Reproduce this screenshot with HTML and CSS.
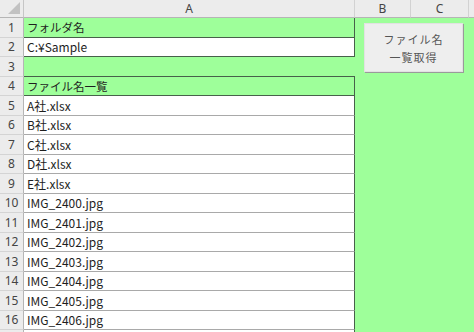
FILE: index.html
```html
<!DOCTYPE html>
<html lang="ja">
  <head>
    <meta charset="UTF-8" />
    <title>ファイル名一覧</title>
    <link rel="stylesheet" href="styles.css">
  </head>
  <body>
    <div class="sheet">
      <div class="corner"></div>
      <div class="col-head">A</div>
      <div class="col-head">B</div>
      <div class="col-head">C</div>
      <div class="col-head last"></div>

      <div class="row-head">1</div>
      <div class="cell title">フォルダ名</div>
      <div class="row-head">2</div>
      <div class="cell value">C:¥Sample</div>
      <div class="row-head">3</div>
      <div class="cell blank"></div>
      <div class="row-head">4</div>
      <div class="cell title">ファイル名一覧</div>
      <div class="row-head">5</div>
      <div class="cell item">A社.xlsx</div>
      <div class="row-head">6</div>
      <div class="cell item">B社.xlsx</div>
      <div class="row-head">7</div>
      <div class="cell item">C社.xlsx</div>
      <div class="row-head">8</div>
      <div class="cell item">D社.xlsx</div>
      <div class="row-head">9</div>
      <div class="cell item">E社.xlsx</div>
      <div class="row-head">10</div>
      <div class="cell item">IMG_2400.jpg</div>
      <div class="row-head">11</div>
      <div class="cell item">IMG_2401.jpg</div>
      <div class="row-head">12</div>
      <div class="cell item">IMG_2402.jpg</div>
      <div class="row-head">13</div>
      <div class="cell item">IMG_2403.jpg</div>
      <div class="row-head">14</div>
      <div class="cell item">IMG_2404.jpg</div>
      <div class="row-head">15</div>
      <div class="cell item">IMG_2405.jpg</div>
      <div class="row-head">16</div>
      <div class="cell item">IMG_2406.jpg</div>
      <div class="row-head"></div>
      <div class="cell item"></div>

      <!-- macro button floating over B:C -->
      <button class="macro-btn">ファイル名<br />一覧取得</button>
    </div>
  </body>
</html>
```

FILE: styles.css
```css
* {
  margin: 0;
  padding: 0;
  box-sizing: border-box;
}

body {
  background-color: #9eff9a;
  font-family: "Noto Sans CJK JP", "Noto Sans", sans-serif;
  overflow: hidden;
}

.sheet {
  display: grid;
  grid-template-columns: 24px 331px 56px 58px 1fr;
  grid-template-rows: 18px repeat(17, 19.5px);
  width: 474px;
  position: relative;
  background-color: #9eff9a;

  .corner {
    background-color: #ececec;
    border-right: 1px solid #c6c6c6;
    border-bottom: 1px solid #b5b5b5;
    position: relative;

    &::after {
      content: "";
      position: absolute;
      right: 3px;
      bottom: 3px;
      border-style: solid;
      border-width: 0 0 12px 12px;
      border-color: transparent transparent #c2c2c2 transparent;
    }
  }

  .col-head {
    background-color: #ececec;
    border-right: 1px solid #d2d2d2;
    border-bottom: 1px solid #b5b5b5;
    color: #444;
    font-size: 12px;
    display: flex;
    justify-content: center;
    align-items: center;
    font-family: "Noto Sans", sans-serif;

    &.last {
      border-right: none;
    }
  }

  .row-head {
    grid-column: 1;
    background-color: #ececec;
    border-right: 1px solid #b5b5b5;
    border-bottom: 1px solid #d4d4d4;
    color: #444;
    font-size: 12px;
    font-family: "Noto Sans", sans-serif;
    display: flex;
    justify-content: center;
    align-items: center;
  }

  .cell {
    grid-column: 2;
    font-size: 12px;
    color: #1e1e1e;
    padding-left: 3px;
    display: flex;
    align-items: center;
    white-space: nowrap;
  }

  .title {
    background-color: #9eff9a;
    border-right: 1px solid #47614a;
    border-bottom: 1px solid #47614a;
    font-size: 11.5px;
  }

  .value {
    background-color: #fff;
    border-right: 1px solid #47614a;
    border-bottom: 1px solid #47614a;
  }

  .blank {
    border-bottom: 1px solid #47614a;
  }

  .item {
    background-color: #fff;
    border-right: 1px solid #47614a;
    border-bottom: 1px solid #a9a9a9;
  }

  .macro-btn {
    position: absolute;
    left: 364px;
    top: 23px;
    width: 99px;
    height: 49px;
    background-color: #eeeeee;
    border: 1px solid #e2e2e2;
    box-shadow: 1px 1px 0 #9a9a9a;
    color: #555;
    font-family: "Noto Sans CJK JP", sans-serif;
    font-size: 11px;
    line-height: 18px;
    letter-spacing: 1px;
  }
}
```
